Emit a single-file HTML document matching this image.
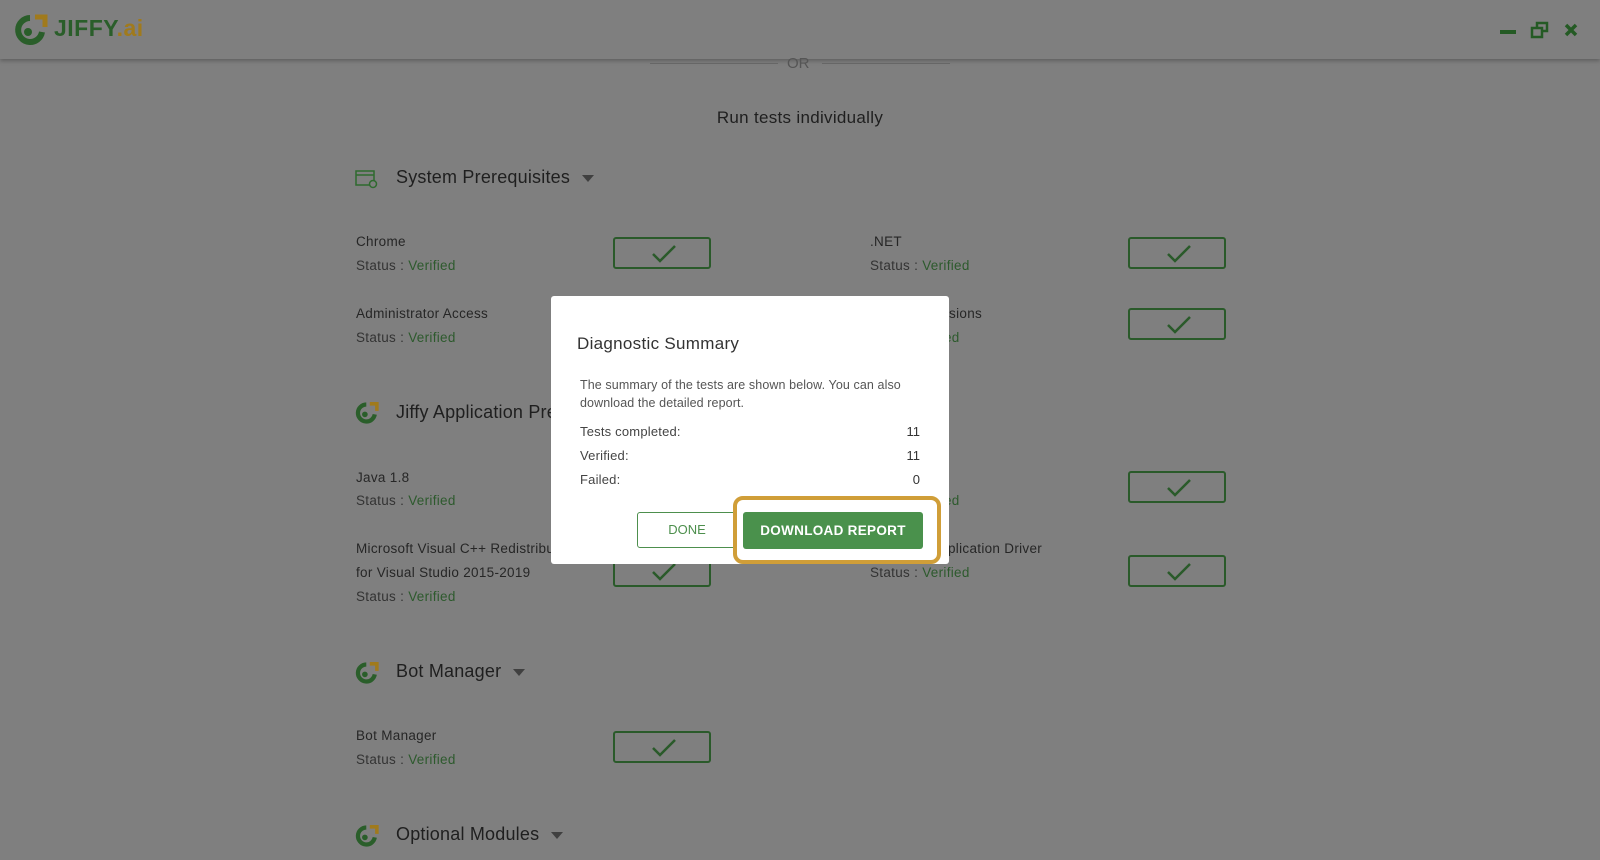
<!DOCTYPE html>
<html><head><meta charset="utf-8"><style>
*{margin:0;padding:0;box-sizing:border-box}
body{width:1600px;height:860px;background:#7f7f7f;font-family:"Liberation Sans",sans-serif;position:relative;overflow:hidden;color:#262626}
.a{position:absolute;white-space:nowrap}
.hdr{position:absolute;left:0;top:0;width:1600px;height:59px;background:#7f7f7f;box-shadow:0 2px 4px rgba(0,0,0,.25)}
.h{font-size:18px;color:#1f1f1f;letter-spacing:.2px}
.n{font-size:13.5px;color:#262626;letter-spacing:.3px}
.s{font-size:13.5px;color:#333;letter-spacing:.3px}
.s b{font-weight:normal;color:#2d5a2d}
.box{position:absolute;width:98px;height:32px;border:2px solid #2a5a2a;border-radius:3px}
.box svg{position:absolute;left:36px;top:5px}
.tri{display:inline-block;width:0;height:0;border-left:6px solid transparent;border-right:6px solid transparent;border-top:7px solid #404040;vertical-align:middle;margin-left:12px}
.modal{position:absolute;left:551px;top:296px;width:398px;height:268px;background:#fff;border-radius:3px}
</style></head><body>
<div class="hdr"></div>
<svg class="a" style="left:14px;top:14px" width="34" height="32" viewBox="0 0 34 32">
<path d="M16 4 A12 12 0 1 0 28 18" fill="none" stroke="#2a5e2a" stroke-width="6"/>
<path d="M21 3 H31 V13" fill="none" stroke="#a07a1c" stroke-width="5"/>
<circle cx="14" cy="18" r="4" fill="#2a5e2a"/></svg>
<div class="a" style="left:54px;top:15px;font-size:23px;font-weight:bold;color:#2a5e2a;letter-spacing:.5px">JIFFY<span style="color:#a07a1c">.ai</span></div>
<div class="a" style="left:1500px;top:30px;width:16px;height:4px;background:#245a24"></div>
<svg class="a" style="left:1530px;top:21px" width="20" height="18"><rect x="7" y="2" width="10" height="8" fill="none" stroke="#245a24" stroke-width="2.5"/><rect x="2" y="7" width="10" height="9" fill="#7f7f7f" stroke="#245a24" stroke-width="2.5"/></svg>
<svg class="a" style="left:1563px;top:22px" width="16" height="16"><path d="M3 3L13 13M13 3L3 13" stroke="#245a24" stroke-width="3.5"/></svg>
<div class="a" style="left:650px;top:63px;width:128px;height:1px;background:#666"></div>
<div class="a" style="left:822px;top:63px;width:128px;height:1px;background:#666"></div>
<div class="a" style="left:787px;top:55px;font-size:15px;color:#555">OR</div>
<div class="a" style="left:0;width:1600px;text-align:center;top:108px;font-size:17px;color:#1f1f1f;letter-spacing:.3px">Run tests individually</div>

<svg class="a" style="left:355px;top:169px" width="24" height="20"><rect x="1" y="2" width="18" height="14" fill="none" stroke="#2f6a2f" stroke-width="1.5"/><line x1="1" y1="6" x2="19" y2="6" stroke="#2f6a2f" stroke-width="1.5"/><circle cx="18" cy="15" r="3.5" fill="#7f7f7f" stroke="#2f6a2f" stroke-width="1.5"/></svg>
<div class="a h" style="left:396px;top:167px">System Prerequisites<span class="tri"></span></div>

<div class="a n" style="left:356px;top:234px">Chrome</div>
<div class="a s" style="left:356px;top:258px">Status : <b>Verified</b></div>
<div class="box" style="left:613px;top:237px"><svg width="26" height="20"><path d="M2 10L9 17L24 2" fill="none" stroke="#2a5a2a" stroke-width="2.5"/></svg></div>
<div class="a n" style="left:870px;top:234px">.NET</div>
<div class="a s" style="left:870px;top:258px">Status : <b>Verified</b></div>
<div class="box" style="left:1128px;top:237px"><svg width="26" height="20"><path d="M2 10L9 17L24 2" fill="none" stroke="#2a5a2a" stroke-width="2.5"/></svg></div>

<div class="a n" style="left:356px;top:306px">Administrator Access</div>
<div class="a s" style="left:356px;top:330px">Status : <b>Verified</b></div>
<div class="a n" style="left:942px;top:306px">ssions</div>
<div class="a s" style="left:944px;top:330px"><b>ed</b></div>
<div class="box" style="left:1128px;top:308px"><svg width="26" height="20"><path d="M2 10L9 17L24 2" fill="none" stroke="#2a5a2a" stroke-width="2.5"/></svg></div>

<svg class="a" style="left:355px;top:401px" width="24" height="24" viewBox="0 0 34 32"><path d="M16 4 A12 12 0 1 0 28 18" fill="none" stroke="#2a5e2a" stroke-width="6"/><path d="M21 3 H31 V13" fill="none" stroke="#a07a1c" stroke-width="5"/><circle cx="14" cy="18" r="4" fill="#2a5e2a"/></svg>
<div class="a h" style="left:396px;top:402px">Jiffy Application Pre</div>

<div class="a n" style="left:356px;top:470px">Java 1.8</div>
<div class="a s" style="left:356px;top:493px">Status : <b>Verified</b></div>
<div class="a s" style="left:944px;top:493px"><b>ed</b></div>
<div class="box" style="left:1128px;top:471px"><svg width="26" height="20"><path d="M2 10L9 17L24 2" fill="none" stroke="#2a5a2a" stroke-width="2.5"/></svg></div>

<div class="a n" style="left:356px;top:541px">Microsoft Visual C++ Redistribut</div>
<div class="a n" style="left:356px;top:565px">for Visual Studio 2015-2019</div>
<div class="a s" style="left:356px;top:589px">Status : <b>Verified</b></div>
<div class="box" style="left:613px;top:555px"><svg width="26" height="20"><path d="M2 10L9 17L24 2" fill="none" stroke="#2a5a2a" stroke-width="2.5"/></svg></div>
<div class="a n" style="left:948px;top:541px">plication Driver</div>
<div class="a s" style="left:870px;top:565px">Status : <b>Verified</b></div>
<div class="box" style="left:1128px;top:555px"><svg width="26" height="20"><path d="M2 10L9 17L24 2" fill="none" stroke="#2a5a2a" stroke-width="2.5"/></svg></div>

<svg class="a" style="left:355px;top:661px" width="24" height="24" viewBox="0 0 34 32"><path d="M16 4 A12 12 0 1 0 28 18" fill="none" stroke="#2a5e2a" stroke-width="6"/><path d="M21 3 H31 V13" fill="none" stroke="#a07a1c" stroke-width="5"/><circle cx="14" cy="18" r="4" fill="#2a5e2a"/></svg>
<div class="a h" style="left:396px;top:661px">Bot Manager<span class="tri"></span></div>
<div class="a n" style="left:356px;top:728px">Bot Manager</div>
<div class="a s" style="left:356px;top:752px">Status : <b>Verified</b></div>
<div class="box" style="left:613px;top:731px"><svg width="26" height="20"><path d="M2 10L9 17L24 2" fill="none" stroke="#2a5a2a" stroke-width="2.5"/></svg></div>

<svg class="a" style="left:355px;top:824px" width="24" height="24" viewBox="0 0 34 32"><path d="M16 4 A12 12 0 1 0 28 18" fill="none" stroke="#2a5e2a" stroke-width="6"/><path d="M21 3 H31 V13" fill="none" stroke="#a07a1c" stroke-width="5"/><circle cx="14" cy="18" r="4" fill="#2a5e2a"/></svg>
<div class="a h" style="left:396px;top:824px">Optional Modules<span class="tri"></span></div>

<div class="modal"></div>
<div class="a" style="left:577px;top:334px;font-size:17px;color:#333;letter-spacing:.3px">Diagnostic Summary</div>
<div class="a" style="left:580px;top:376px;font-size:12.5px;color:#555;line-height:18px;letter-spacing:.1px">The summary of the tests are shown below. You can also<br>download the detailed report.</div>
<div class="a" style="left:580px;top:424px;font-size:13px;color:#444;letter-spacing:.2px">Tests completed:</div>
<div class="a" style="left:580px;top:448px;font-size:13px;color:#444;letter-spacing:.2px">Verified:</div>
<div class="a" style="left:580px;top:472px;font-size:13px;color:#444;letter-spacing:.2px">Failed:</div>
<div class="a" style="left:900px;width:20px;text-align:right;top:424px;font-size:13px;color:#333">11</div>
<div class="a" style="left:900px;width:20px;text-align:right;top:448px;font-size:13px;color:#333">11</div>
<div class="a" style="left:900px;width:20px;text-align:right;top:472px;font-size:13px;color:#333">0</div>
<div class="a" style="left:637px;top:512px;width:100px;height:36px;border:1.5px solid #4d8f4d;border-radius:3px;text-align:center;line-height:33px;font-size:13px;color:#4d8f4d">DONE</div>
<div class="a" style="left:733px;top:496px;width:208px;height:68px;border:4px solid #d09e38;border-radius:10px"></div>
<div class="a" style="left:743px;top:512px;width:180px;height:37px;background:#4a914c;border-radius:3px;text-align:center;line-height:37px;font-size:13.5px;color:#fff;font-weight:bold;letter-spacing:.3px">DOWNLOAD REPORT</div>
</body></html>
